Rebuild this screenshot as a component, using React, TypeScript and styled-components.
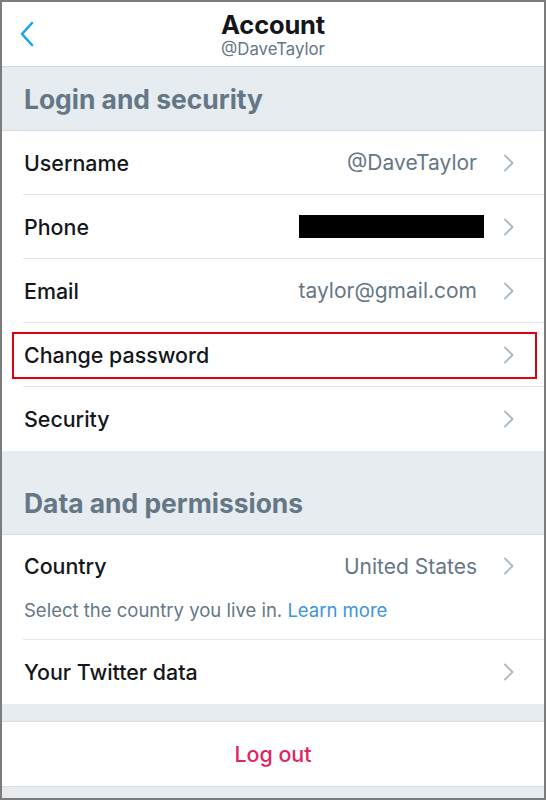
import styled, { createGlobalStyle } from 'styled-components';

const GlobalStyle = createGlobalStyle`
  body {
    margin: 0;
    background: #fff;
    font-family: Inter, "Noto Sans", sans-serif;
  }
`

interface IRow {
    label: string
    value?: string
    redacted?: boolean
    highlight?: boolean
    last?: boolean
}

const loginRows: IRow[] = [
    { label: 'Username', value: '@DaveTaylor' },
    { label: 'Phone', redacted: true },
    { label: 'Email', value: 'taylor@gmail.com' },
    { label: 'Change password', highlight: true },
    { label: 'Security', last: true },
]

const Chevron = () => (
    <ChevronIcon width="12" height="20" viewBox="0 0 12 20">
        <path d="M2 2.5 L9.5 10 L2 17.5" fill="none" stroke="currentColor" strokeWidth="1.8" strokeLinecap="round" strokeLinejoin="round" />
    </ChevronIcon>
)

const App = () => {
    return (
        <>
            <GlobalStyle />
            <Frame>
                <Header>
                    <BackButton>
                        <svg width="18" height="28" viewBox="0 0 18 28">
                            <path d="M14 3 L4 14 L14 25" fill="none" stroke="currentColor" strokeWidth="2.6" strokeLinecap="round" strokeLinejoin="round" />
                        </svg>
                    </BackButton>
                    <Title>Account</Title>
                    <Subtitle>@DaveTaylor</Subtitle>
                </Header>

                <SectionTitle>Login and security</SectionTitle>
                <Group>
                    {loginRows.map(row => (
                        <Row key={row.label} $highlight={row.highlight} $last={row.last}>
                            <Label>{row.label}</Label>
                            {row.value && <Value>{row.value}</Value>}
                            {row.redacted && <Redacted />}
                            <Chevron />
                        </Row>
                    ))}
                </Group>

                <SectionTitle $spaced>Data and permissions</SectionTitle>
                <Group>
                    <CountryItem>
                        <CountryLine>
                            <Label>Country</Label>
                            <Value>United States</Value>
                            <Chevron />
                        </CountryLine>
                        <Hint>
                            Select the country you live in. <HintLink>Learn more</HintLink>
                        </Hint>
                    </CountryItem>
                    <Row $last>
                        <Label>Your Twitter data</Label>
                        <Chevron />
                    </Row>
                </Group>

                <LogoutBar>Log out</LogoutBar>
            </Frame>
        </>
    )
}

const Frame = styled.div`
    width: 546px;
    height: 800px;
    box-sizing: border-box;
    border: 2px solid #7c7c7c;
    background: #e6ecf0;
    overflow: hidden;
    display: flex;
    flex-direction: column;
`
const Header = styled.header`
    position: relative;
    height: 64px;
    background: #fff;
    border-bottom: 1px solid #d3dbe1;
    display: flex;
    flex-direction: column;
    align-items: center;
    justify-content: center;
    flex-shrink: 0;
`
const BackButton = styled.div`
    position: absolute;
    left: 16px;
    top: 18px;
    color: #1da1f2;
    display: flex;
`
const Title = styled.div`
    font-size: 25.5px;
    font-weight: 700;
    color: #14171a;
    line-height: 28px;
    margin-top: 2px;
    letter-spacing: -0.2px;
`
const Subtitle = styled.div`
    font-size: 16.8px;
    color: #657786;
    line-height: 21px;
`
const SectionTitle = styled.h2<{ $spaced?: boolean }>`
    margin: 0;
    box-sizing: border-box;
    padding: ${p => (p.$spaced ? '20px' : '0')} 0 0 22px;
    height: ${p => (p.$spaced ? '84px' : '64px')};
    display: flex;
    align-items: center;
    font-size: 26.4px;
    font-weight: 700;
    color: #657786;
    border-bottom: 1px solid #d6dee4;
    flex-shrink: 0;
`
const Group = styled.div`
    background: #fff;
    padding-left: 21px;
`
const Row = styled.div<{ $highlight?: boolean; $last?: boolean }>`
    position: relative;
    height: 64px;
    box-sizing: border-box;
    display: flex;
    align-items: center;
    padding: 0 29px 0 1px;
    border-bottom: ${p => (p.$last ? 'none' : '1px solid #e1e8ed')};

    &::after {
        content: '';
        display: ${p => (p.$highlight ? 'block' : 'none')};
        position: absolute;
        left: -11px;
        right: 7px;
        top: 9px;
        bottom: 7px;
        border: 2px solid #e3000f;
        pointer-events: none;
    }
`
const Label = styled.span`
    flex: 1;
    font-size: 21.4px;
    font-weight: 500;
    color: #14171a;
`
const Value = styled.span`
    font-size: 21px;
    color: #657786;
    margin-right: 26px;
`
const Redacted = styled.div`
    width: 185px;
    height: 23px;
    background: #000;
    margin-right: 19px;
`
const ChevronIcon = styled.svg`
    color: #aab8c2;
    flex-shrink: 0;
`
const CountryItem = styled.div`
    padding: 0 29px 0 1px;
    border-bottom: 1px solid #e1e8ed;
    height: 105px;
    box-sizing: border-box;
`
const CountryLine = styled.div`
    display: flex;
    align-items: center;
    height: 62px;
`
const Hint = styled.div`
    font-size: 18.5px;
    color: #657786;
    line-height: 24px;
    margin-top: 1px;
`
const HintLink = styled.span`
    color: #3b94e0;
`
const LogoutBar = styled.div`
    margin-top: 17px;
    height: 64px;
    background: #fff;
    border-top: 1px solid #d6dee4;
    border-bottom: 1px solid #d6dee4;
    display: flex;
    align-items: center;
    justify-content: center;
    font-size: 21.4px;
    font-weight: 500;
    color: #e0245e;
    flex-shrink: 0;
`

export default App
